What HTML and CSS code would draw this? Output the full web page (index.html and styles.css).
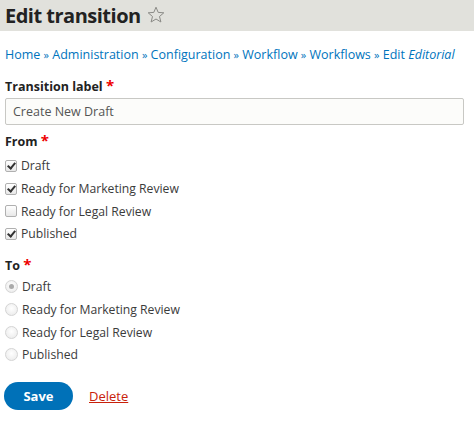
FILE: index.html
```html
<!DOCTYPE html>
<html>
<head>
<meta charset="utf-8">
<link rel="stylesheet" href="styles.css">
</head>
<body>
<header class="page-header">
  <h1 class="title">Edit transition</h1>
  <svg class="star" width="18" height="18" viewBox="0 0 18 18"><path d="M9 1.2 L11.2 6.4 L16.8 6.8 L12.5 10.5 L13.9 16 L9 13 L4.1 16 L5.5 10.5 L1.2 6.8 L6.8 6.4 Z" fill="none" stroke="#8a8a86" stroke-width="1" stroke-linejoin="round"/></svg>
</header>
<main class="content">
  <nav class="breadcrumb">
    <a href="#">Home</a> <span class="sep">»</span> <a href="#">Administration</a> <span class="sep">»</span> <a href="#">Configuration</a> <span class="sep">»</span> <a href="#">Workflow</a> <span class="sep">»</span> <a href="#">Workflows</a> <span class="sep">»</span> <a href="#">Edit <em>Editorial</em></a>
  </nav>
  <form class="form">
    <div class="field">
      <label class="label">Transition label <span class="req">*</span></label>
      <input class="text-input" type="text" value="Create New Draft">
    </div>
    <div class="field group from">
      <div class="label">From <span class="req">*</span></div>
      <label class="option"><span class="box checked"></span>Draft</label>
      <label class="option"><span class="box checked"></span>Ready for Marketing Review</label>
      <label class="option"><span class="box"></span>Ready for Legal Review</label>
      <label class="option"><span class="box checked"></span>Published</label>
    </div>
    <div class="field group to">
      <div class="label">To <span class="req">*</span></div>
      <label class="option"><span class="radio selected"></span>Draft</label>
      <label class="option"><span class="radio"></span>Ready for Marketing Review</label>
      <label class="option"><span class="radio"></span>Ready for Legal Review</label>
      <label class="option"><span class="radio"></span>Published</label>
    </div>
    <div class="actions">
      <button class="btn-save" type="button">Save</button>
      <a class="delete" href="#">Delete</a>
    </div>
  </form>
</main>
</body>
</html>
```

FILE: styles.css
```css
html, body {
  margin: 0;
  padding: 0;
  background: #fff;
  font-family: "Open Sans", "DejaVu Sans", sans-serif;
  color: #333;
}
.page-header {
  background: #e1e1dc;
  height: 31px;
  display: flex;
  align-items: center;
  padding: 0 5px;
  gap: 6px;
}
.title {
  margin: 0;
  font-size: 20px;
  font-weight: 700;
  letter-spacing: -0.5px;
  color: #222;
  line-height: 31px;
}
.star { margin-top: -1px; }
.content {
  padding: 0 5px;
}
.breadcrumb {
  margin-top: 16px;
  font-size: 12.5px;
  line-height: 16px;
  color: #0074bd;
}
.breadcrumb a {
  color: #0074bd;
  text-decoration: none;
}
.breadcrumb .sep { color: #0074bd; font-size: 11px; }
.form { margin-top: 16px; }
.field { margin: 0; }
.label {
  display: block;
  font-size: 12.5px;
  font-weight: 700;
  color: #222;
  line-height: 16px;
  margin-bottom: 3px;
}
.req { color: #e00; font-size: 15px; line-height: 10px; }
.text-input {
  display: block;
  box-sizing: border-box;
  width: 459px;
  height: 27px;
  border: 1px solid #c8c8c4;
  border-radius: 2px;
  background: #fcfcfa;
  font-family: inherit;
  font-size: 12.5px;
  color: #555;
  padding: 0 7px;
  margin: 0;
}
.group.from { margin-top: 9px; }
.group.from .label { margin-bottom: 4.5px; }
.group.to { margin-top: 12.5px; }
.group.to .label { margin-bottom: 1.6px; }
.option {
  display: flex;
  align-items: center;
  font-size: 12.2px;
  color: #3b3b3b;
  height: 22.7px;
  gap: 4px;
}
.box {
  width: 10px;
  height: 10px;
  border: 1px solid #b0b0b0;
  border-radius: 2px;
  background: linear-gradient(#fff, #e8e8e8);
  position: relative;
  flex: none;
}
.box.checked::after {
  content: "";
  position: absolute;
  left: 3px;
  top: 0px;
  width: 3px;
  height: 6px;
  border: solid #333;
  border-width: 0 2px 2px 0;
  transform: rotate(40deg);
}
.radio {
  width: 11px;
  height: 11px;
  border: 1px solid #d4d4d4;
  border-radius: 50%;
  background: radial-gradient(circle at 50% 40%, #fff, #e8e8e8);
  position: relative;
  flex: none;
}
.radio.selected::after {
  content: "";
  position: absolute;
  left: 3px;
  top: 3px;
  width: 5px;
  height: 5px;
  border-radius: 50%;
  background: #aaa;
}
.actions {
  margin-top: 15.5px;
  margin-left: -1px;
  display: flex;
  align-items: center;
  gap: 16px;
}
.btn-save {
  width: 69px;
  height: 28px;
  border: none;
  border-radius: 14px;
  background: #0071b8;
  color: #fff;
  font-family: inherit;
  font-size: 13px;
  font-weight: 700;
  padding: 0;
}
.delete {
  color: #c8210a;
  font-size: 13px;
  text-decoration: underline;
}
```
